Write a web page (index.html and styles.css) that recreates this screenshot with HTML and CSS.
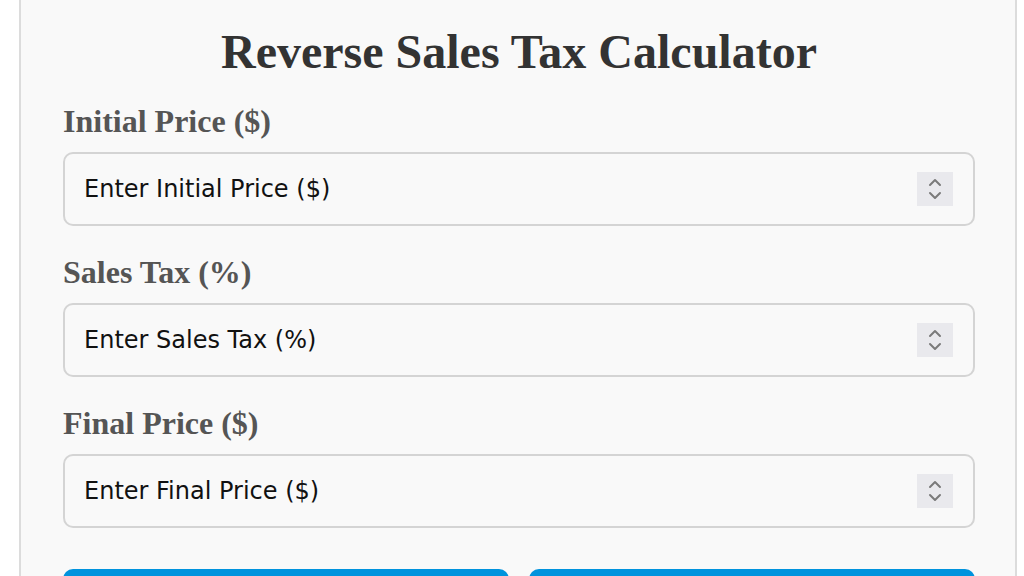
FILE: index.html
```html
<!DOCTYPE html>
<html lang="en">
<head>
<meta charset="utf-8">
<title>Reverse Sales Tax Calculator</title>
<link rel="stylesheet" href="styles.css">
</head>
<body>
<div class="calc">
  <h1 class="title">Reverse Sales Tax Calculator</h1>
  <div class="field">
    <label class="label" for="initial">Initial Price ($)</label>
    <div class="input">
      <span class="placeholder">Enter Initial Price ($)</span>
      <span class="spin"><svg width="16" height="26" viewBox="0 0 16 26"><path d="M3 9 L8 4 L13 9 M3 17 L8 22 L13 17" fill="none" stroke="#7a7a7a" stroke-width="2" stroke-linecap="round" stroke-linejoin="round"/></svg></span>
    </div>
  </div>
  <div class="field">
    <label class="label" for="tax">Sales Tax (%)</label>
    <div class="input">
      <span class="placeholder">Enter Sales Tax (%)</span>
      <span class="spin"><svg width="16" height="26" viewBox="0 0 16 26"><path d="M3 9 L8 4 L13 9 M3 17 L8 22 L13 17" fill="none" stroke="#7a7a7a" stroke-width="2" stroke-linecap="round" stroke-linejoin="round"/></svg></span>
    </div>
  </div>
  <div class="field">
    <label class="label" for="final">Final Price ($)</label>
    <div class="input">
      <span class="placeholder">Enter Final Price ($)</span>
      <span class="spin"><svg width="16" height="26" viewBox="0 0 16 26"><path d="M3 9 L8 4 L13 9 M3 17 L8 22 L13 17" fill="none" stroke="#7a7a7a" stroke-width="2" stroke-linecap="round" stroke-linejoin="round"/></svg></span>
    </div>
  </div>
  <div class="buttons">
    <button class="btn">Calculate</button>
    <button class="btn">Reset</button>
  </div>
</div>
</body>
</html>
```
FILE: styles.css
```css
html, body {
  margin: 0;
  padding: 0;
  background: #ffffff;
  overflow: hidden;
}
.calc {
  margin-left: 19px;
  width: 998px;
  box-sizing: border-box;
  background: #f9f9f9;
  border-left: 2px solid #dcdcdc;
  border-right: 2px solid #dcdcdc;
  padding: 25px 40px 40px 42px;
  height: 700px;
}
.title {
  margin: 0 0 22px 0;
  text-align: center;
  font-family: "Liberation Serif", serif;
  font-weight: bold;
  font-size: 48px;
  line-height: 54px;
  color: #333333;
}
.field {
  display: flex;
  flex-direction: column;
  margin-bottom: 26px;
}
.label {
  font-family: "Liberation Serif", serif;
  font-weight: bold;
  font-size: 32px;
  line-height: 40px;
  color: #555555;
  margin-bottom: 11px;
}
.input {
  display: flex;
  align-items: center;
  justify-content: space-between;
  height: 74px;
  box-sizing: border-box;
  border: 2px solid #d4d4d4;
  border-radius: 10px;
  background: #f9f9f9;
  padding: 0 20px 0 19px;
}
.placeholder {
  font-family: "DejaVu Sans", sans-serif;
  font-size: 24px;
  color: #111111;
}
.spin {
  display: flex;
  align-items: center;
  justify-content: center;
  width: 36px;
  height: 34px;
  background: #e9e9ed;
}
.buttons {
  display: flex;
  gap: 20px;
  margin-top: 41px;
}
.btn {
  flex: 1;
  height: 60px;
  border: none;
  border-radius: 10px;
  background: #0093dd;
  color: #ffffff;
  font-family: "Liberation Sans", sans-serif;
  font-size: 24px;
}
```
